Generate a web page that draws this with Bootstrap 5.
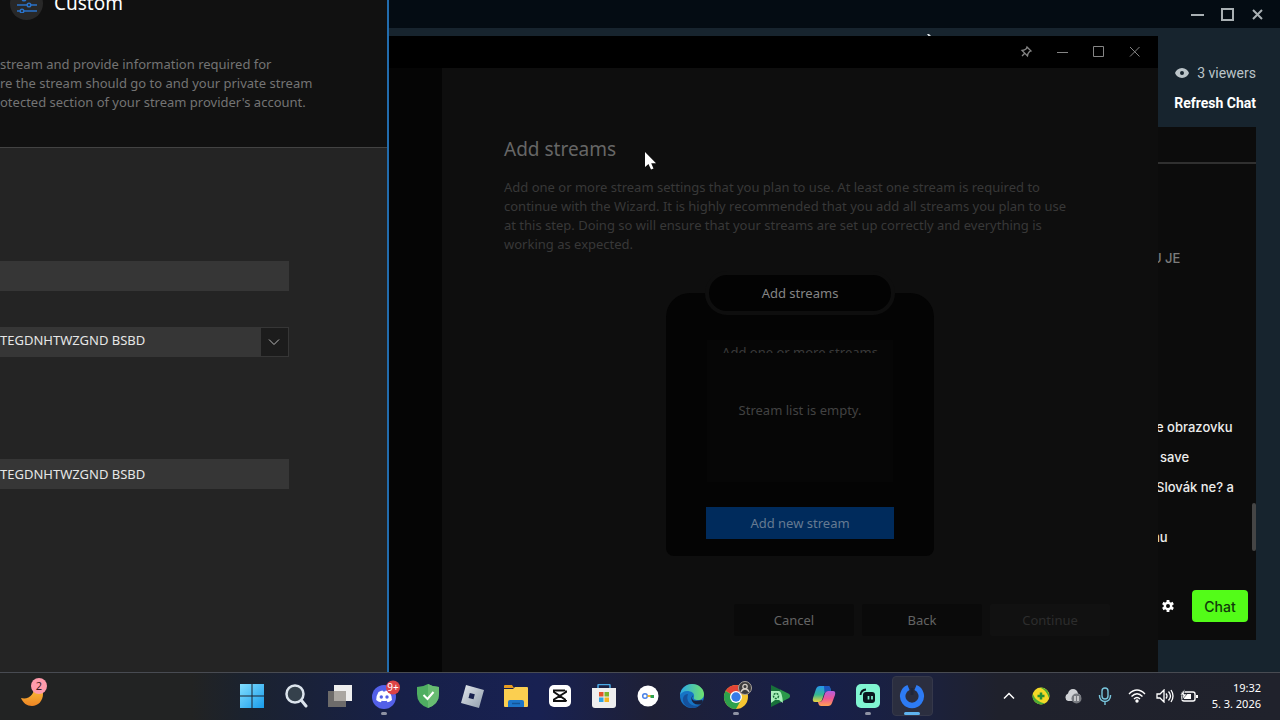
<!DOCTYPE html>
<html lang="en" data-bs-theme="dark">
<head>
<meta charset="utf-8">
<meta name="viewport" content="width=device-width, initial-scale=1">
<title>Desktop</title>
<link href="https://cdn.jsdelivr.net/npm/bootstrap@5.3.0/dist/css/bootstrap.min.css" rel="stylesheet">
<style>
body{font-family:"Noto Sans","Open Sans",sans-serif;font-size:13px;line-height:19px;background:#17242e}
svg{display:block;flex:none}
button{color:inherit}
.plain{background:none;border:0;padding:0}
/* chat application */
.chat-app{inset:0;background:#17242e;font-family:Roboto,sans-serif;font-size:14px}
.chat-bar{height:28px;background:#040c13;color:#a9b0b3;padding-right:16px;gap:17px}
.chat-side{width:128px;margin-right:24px;padding-top:30px}
.chat-side .info{height:30px;color:#bcc5c9}
.chat-side a{height:30px;color:#fff;font-weight:700}
.chat-panel{background:#0c0c0c;margin-top:9px;height:513px;font-family:Inter,sans-serif;font-weight:500;font-size:13px;color:#ececec;padding-left:24px}
.chat-tab{height:37px;border-bottom:2px solid #303030;margin-left:-24px}
.msg{height:30px;line-height:30px}
.m-top{margin-top:79px;color:#7c7c7c}
.m-first{margin-top:139px}
.m-last{margin-top:20px}
.thumb{width:4px;height:48px;right:0;top:376px;background:#454545;border-radius:2px}
.chat-foot{margin-top:38px;padding-right:8px;gap:18px}
.chat-send{width:56px;height:32px;border:0;border-radius:4px;background:#53fc18;color:#10380a;font-size:14px;font-weight:500;padding:0}
.glint{left:925px;top:33px}
/* wizard */
.wizard{left:388px;right:122px;top:36px;bottom:0;background:#0e0e0e}
.wiz-bar{height:32px;background:#000;color:#858585;padding:0 16px 2px 0;gap:21px}
.wiz-rail{width:54px;background:#050505}
.wiz-main{padding:68px 48px 36px 62px}
.wiz-main h1{font-size:19px;line-height:26px;color:#666;font-weight:400;margin:0 0 16px}
.wiz-main p{color:#383838;margin:0}
.stream-card{width:268px;height:263px;margin:39px auto 0;background:#040404;border-radius:24px 24px 8px 8px}
.wiz-mid{padding-right:14px}
.pill{width:190px;height:44px;margin-top:-22px;border:4px solid #0e0e0e;border-radius:22px;background:#030303;color:#858585}
.list-box{width:186px;height:142px;margin-top:25px;background:#060606;color:#424242}
.list-clip{height:10px;margin-top:3px;overflow:hidden;color:#3a3a3a}
.list-empty{padding-bottom:14px}
.btn-new{width:188px;height:32px;margin-top:25px;border:0;border-radius:0;background:#002b5c;color:#657a92}
.wiz-btn{width:120px;height:32px;border:0;border-radius:2px;background:#0a0a0a;color:#646464}
.wiz-btn.off{background:#111;color:#2d2d2d}
/* settings dialog */
.dialog{left:0;top:0;bottom:0;width:389px;background:#242424;border-right:2px solid #226cad;overflow:hidden}
.dlg-head{margin-top:-13px;background:#111;border-bottom:1px solid #434343;height:161px}
.dlg-title{padding-left:10px;gap:11px;height:32px;font-size:19px;color:#fff}
.knob{width:33px;height:33px;border-radius:50%;background:#282828}
.dlg-head p{margin:36px 0 0;color:#747474}
.field{height:30px;width:289px;background:#363636;color:#e6e6e6;border:0;padding:0;border-radius:0;appearance:none}
.f1{margin-top:113px}.f2{margin-top:36px}.f3{margin-top:102px}
.f2 select{padding-bottom:4px}
.drop{right:1px;top:1px;width:27px;height:28px;padding-right:1px;background:#1c1c1c;color:#b8b8b8;pointer-events:none}
/* taskbar */
.taskbar{height:48px;padding-bottom:2px;border-top:1px solid #484b52;background:linear-gradient(90deg,#222323 0,#222323 15%,#1b222e 19%,#172048 31%,#182152 42%,#1e2036 51%,#171f49 64%,#1b213e 72%,#1f212c 78%,#20222c 100%);color:#fff;z-index:5}
.widgets{width:18%;padding-left:20px}
.app,.tray button{display:grid;place-items:center}
.app{width:44px;height:47px}
.app.open::after{content:"";position:absolute;bottom:4px;left:19px;width:6px;height:3px;border-radius:2px;background:#8e92a3}
.app.active::before{content:"";position:absolute;inset:4px 1px 3px 2px;background:#2b2e3f;border:1px solid #35384a;border-radius:4px;z-index:-1}
.app.active{z-index:0}
.app.active::after{width:16px;left:14px;background:#5fb4f0}
.tray{padding-right:19px}
.t-wide{width:32px;height:47px}.t-slim{width:24px;height:47px}
.clock{width:60px;font-size:11px;line-height:16px;text-align:right}
.cursor{left:644px;top:151px;z-index:9}
</style>
</head>
<body class="vh-100 d-flex flex-column overflow-hidden">
<main class="position-relative flex-fill overflow-hidden">

<section class="chat-app position-absolute d-flex flex-column" aria-label="Chat">
  <header class="chat-bar d-flex justify-content-end align-items-center">
    <button class="plain" aria-label="Minimize"><svg width="13" height="13" stroke="currentColor" stroke-width="2"><path d="M0 7h13"/></svg></button>
    <button class="plain" aria-label="Maximize"><svg width="13" height="13" fill="none" stroke="currentColor" stroke-width="2"><path d="M1 1h11v11H1z"/></svg></button>
    <button class="plain" aria-label="Close"><svg width="13" height="13" fill="none" stroke="currentColor" stroke-width="2"><path d="M2 2l9 9M11 2l-9 9"/></svg></button>
  </header>
  <svg class="glint position-absolute" width="8" height="5" fill="#dfe5e8"><path d="M2 1l2 0 3 3H4z"/></svg>
  <div class="chat-side align-self-end text-nowrap">
    <div class="info d-flex align-items-center justify-content-end gap-2"><svg width="14" height="12" viewBox="0 0 14 12"><path fill="#bcc5c9" fill-rule="evenodd" d="M7 1C3.600 1 1 3.200 0 6c1 2.800 3.600 5 7 5s6-2.200 7-5C13 3.200 10.400 1 7 1zm0 3a2 2 0 1 1 0 4 2 2 0 0 1 0-4z"/></svg>3 viewers</div>
    <a href="#" class="d-flex align-items-center justify-content-end text-decoration-none">Refresh Chat</a>
    <div class="chat-panel position-relative overflow-hidden">
      <div class="chat-tab"></div>
      <div class="msg m-top">U JE</div>
      <div class="msg m-first ps-1">e obrazovku</div>
      <div class="msg ps-2">save</div>
      <div class="msg ps-1">Slovák ne? a</div>
      <div class="msg m-last">nu</div>
      <div class="thumb position-absolute"></div>
      <div class="chat-foot d-flex align-items-center justify-content-end">
        <button class="plain" aria-label="Chat settings"><svg width="12" height="12" viewBox="0 0 12 12"><path d="M6 0v3M6 9v3M.8 3l2.600 1.500M8.600 7.500L11.200 9M.8 9l2.600-1.500M8.600 4.500L11.200 3" stroke="#fff" stroke-width="2.800"/><circle cx="6" cy="6" r="3.200" fill="#0c0c0c" stroke="#fff" stroke-width="2.400"/></svg></button>
        <button class="chat-send">Chat</button>
      </div>
    </div>
  </div>
</section>

<section class="wizard position-absolute d-flex flex-column" aria-label="Wizard">
  <header class="wiz-bar d-flex justify-content-end align-items-center">
    <button class="plain" aria-label="Pin"><svg width="15" height="15" viewBox="0 0 15 15" fill="none" stroke="currentColor" stroke-width="1.300"><path d="M8 3l4 4-1.500.5-1.500 2-.5 2.500L3 6.500 5.500 6l2-1.500zM5.500 9.500L3 12"/></svg></button>
    <button class="plain" aria-label="Minimize"><svg width="15" height="15" stroke="currentColor"><path d="M2 8.500h11"/></svg></button>
    <button class="plain" aria-label="Maximize"><svg width="15" height="15" fill="none" stroke="currentColor"><path d="M2.500 2.500h10v10h-10z"/></svg></button>
    <button class="plain" aria-label="Close"><svg width="15" height="15" fill="none" stroke="currentColor"><path d="M3 3l9.500 9.500M12.500 3L3 12.500"/></svg></button>
  </header>
  <div class="d-flex flex-fill">
    <div class="wiz-rail"></div>
    <div class="wiz-main flex-fill d-flex flex-column">
      <h1>Add streams</h1>
      <p class="text-nowrap">Add one or more stream settings that you plan to use. At least one stream is required to<br>continue with the Wizard. It is highly recommended that you add all streams you plan to use<br>at this step. Doing so will ensure that your streams are set up correctly and everything is<br>working as expected.</p>
      <div class="wiz-mid">
        <div class="stream-card d-flex flex-column align-items-center">
          <div class="pill d-flex align-items-center justify-content-center flex-shrink-0">Add streams</div>
          <div class="list-box text-center d-flex flex-column">
            <div class="list-clip text-nowrap">Add one or more streams</div>
            <div class="list-empty flex-fill d-flex align-items-center justify-content-center">Stream list is empty.</div>
          </div>
          <button class="btn-new">Add new stream</button>
        </div>
      </div>
      <div class="d-flex justify-content-end gap-2 mt-auto">
        <button class="wiz-btn">Cancel</button><button class="wiz-btn">Back</button><button class="wiz-btn off" disabled>Continue</button>
      </div>
    </div>
  </div>
</section>

<section class="dialog position-absolute" aria-label="Custom stream">
  <header class="dlg-head">
    <div class="dlg-title d-flex align-items-center">
      <span class="knob d-flex align-items-center justify-content-center"><svg width="22" height="20" viewBox="0 0 22 20" fill="none" stroke="#2a72c8" stroke-width="1.500"><path d="M1 6h5M10 6h11M1 12h10M15 12h6M1 18h3M8 18h13"/><circle cx="8" cy="6" r="1.800"/><circle cx="13" cy="12" r="1.800"/><circle cx="6" cy="18" r="1.800"/></svg></span>Custom
    </div>
    <p class="text-nowrap">stream and provide information required for<br>re the stream should go to and your private stream<br>otected section of your stream provider's account.</p>
  </header>
  <div class="f1"><input class="field d-block" aria-label="Stream name"></div>
  <div class="f2 position-relative field">
    <select class="field d-block" aria-label="Stream server"><option>TEGDNHTWZGND BSBD</option></select>
    <span class="drop position-absolute d-flex align-items-center justify-content-center"><svg width="12" height="8" fill="none" stroke="currentColor"><path d="M1 1.500l5 5 5-5"/></svg></span>
  </div>
  <div class="f3"><input class="field d-block" aria-label="Stream key" value="TEGDNHTWZGND BSBD"></div>
</section>

<svg class="cursor position-absolute" width="14" height="20" viewBox="0 0 14 20"><path d="M1 1v15l3.500-3 2.500 5.500 2.500-1-2.300-5.300H12z" fill="#fff"/></svg>
</main>

<footer class="taskbar d-flex align-items-center position-relative flex-shrink-0">
  <div class="widgets">
    <button class="plain" aria-label="Weather"><svg width="28" height="30" viewBox="0 0 28 30"><defs><linearGradient id="mo" x2="0" y2="1"><stop stop-color="#fcc43c"/><stop offset="1" stop-color="#ee8524"/></linearGradient></defs><path d="M1 20c8 2 14-4 13-12 6 0 9 4 9 8 0 7-5 12-11 12-5 0-9-3-11-8z" fill="url(#mo)"/><circle cx="19" cy="8" r="8" fill="#ff9bac"/><text x="19" y="12" font-size="11" text-anchor="middle" fill="#3a1b22">2</text></svg></button>
  </div>
  <nav class="d-flex" aria-label="Apps">
    <button class="plain app" aria-label="Start"><svg width="24" height="24" viewBox="0 0 24 24"><defs><linearGradient id="wi" x2="1" y2="1"><stop stop-color="#83dfff"/><stop offset="1" stop-color="#189bea"/></linearGradient></defs><path fill="url(#wi)" d="M0 0h11.500v11.500H0zM12.500 0H24v11.500H12.500zM0 12.500h11.500V24H0zM12.500 12.500H24V24H12.500z"/></svg></button>
    <button class="plain app" aria-label="Search"><svg width="24" height="24" viewBox="0 0 24 24"><circle cx="11" cy="10" r="8.500" fill="#35414c" stroke="#dce4ed" stroke-width="2.500"/><path d="M17.500 16.500L22 22" stroke="#dce4ed" stroke-width="3" stroke-linecap="round"/></svg></button>
    <button class="plain app" aria-label="Task view"><svg width="24" height="24" viewBox="0 0 24 24"><path d="M6 1h18v16H6z" fill="#eee"/><path d="M0 7h18v16H0z" fill="#77736f" opacity=".9"/><path d="M6 7h12v10H6z" fill="#aaa6a1"/></svg></button>
    <button class="plain app open position-relative" aria-label="Discord"><svg width="32" height="32" viewBox="0 0 32 32"><circle cx="16" cy="17" r="12" fill="#5360e8"/><path d="M10.500 12q2.500-1.500 4-1.500l.6 1h2l.6-1q2 .1 4 1.500 2.500 4.500 2.300 8-2 2-4.500 2.200l-.8-1.500q-2.700.6-5 0l-.8 1.500Q10 22 8.200 20q-.2-4 2.300-8z" fill="#fff"/><circle cx="13.300" cy="17" r="1.700" fill="#5360e8"/><circle cx="19" cy="17" r="1.700" fill="#5360e8"/><circle cx="25" cy="7.500" r="7" fill="#dc4347"/><text x="25" y="11" font-size="10" text-anchor="middle" fill="#fff">9+</text></svg></button>
    <button class="plain app" aria-label="Security"><svg width="24" height="24" viewBox="0 0 24 24"><path d="M12 0q5 3 11 3v7q0 10-11 14Q1 20 1 10V3q6 0 11-3z" fill="#4fae62"/><path d="M12 0q5 3 11 3v7q0 10-11 14z" fill="#68bc72"/><path d="M7.500 11l4 4 6-7" fill="none" stroke="#fff" stroke-width="2"/></svg></button>
    <button class="plain app" aria-label="Roblox"><svg width="24" height="24" viewBox="0 0 24 24"><defs><linearGradient id="rb" x2="1" y2="1"><stop stop-color="#e4e9ee"/><stop offset="1" stop-color="#8f9cab"/></linearGradient></defs><path fill="url(#rb)" fill-rule="evenodd" d="M6 1l18 5-5 18-18-5zm3.800 8L8.500 14l5 1.300 1.300-5z"/></svg></button>
    <button class="plain app" aria-label="Files"><svg width="26" height="24" viewBox="0 0 26 24"><path d="M1 2q0-1 1-1h7l2 3h-10z" fill="#e89b20"/><path d="M1 5h9l2-2h12q1 0 1 1v18q0 1-1 1H2q-1 0-1-1z" fill="#fbcf50"/><path d="M5 23v-5q0-2 2-2h12q2 0 2 2v5z" fill="#1d75c8"/><path d="M9 19.500h8" stroke="#145495" stroke-width="1.500"/></svg></button>
    <button class="plain app" aria-label="CapCut"><svg width="22" height="22" viewBox="0 0 22 22"><rect width="22" height="22" rx="5" fill="#fff"/><path d="M17 5.500V7L5 14.500V16h11v-1.500L5 7V5.500h11M17 15v1.500" fill="none" stroke="#111" stroke-width="2"/></svg></button>
    <button class="plain app" aria-label="Store"><svg width="24" height="24" viewBox="0 0 24 24"><path d="M6 5V1.500q0-1 1-1h10q1 0 1 1V5" fill="none" stroke="#4aa9e6" stroke-width="1.500"/><path d="M0 4h24v17q0 3-3 3H3q-3 0-3-3z" fill="#eee"/><path fill="#e4532a" d="M7 8h4.500v4.500H7z"/><path fill="#7cb52b" d="M12.500 8H17v4.500h-4.500z"/><path fill="#2fa3e4" d="M7 13.500h4.500V18H7z"/><path fill="#f5b51f" d="M12.500 13.500H17V18h-4.500z"/></svg></button>
    <button class="plain app" aria-label="Passwords"><svg width="22" height="22" viewBox="0 0 22 22"><circle cx="11" cy="11" r="10.500" fill="#fff"/><circle cx="8" cy="11" r="2.300" fill="none" stroke="#4a82e8" stroke-width="1.500"/><path d="M10.500 11H14" stroke="#f4b62b" stroke-width="2"/><path d="M13.500 11.500H17" stroke="#2fa350" stroke-width="3"/></svg></button>
    <button class="plain app" aria-label="Edge"><svg width="26" height="26" viewBox="0 0 26 26"><defs><linearGradient id="ed"><stop stop-color="#2aa7e9"/><stop offset="1" stop-color="#70e26c"/></linearGradient></defs><circle cx="13" cy="13" r="12" fill="#1674c5"/><path d="M1 12C2 5 7 1 13 1c7 0 12 5 12 10 0 4-3 6-6 6-3 0-5-1-4-3 1-4-3-6-7-6-3 0-6 2-7 4z" fill="url(#ed)"/><path d="M9 11c-3 8 4 14 12 11-4 4-11 4-15 0-4-5-2-11 3-11z" fill="#15519c"/><path d="M14 12q-4 8 9 5l1 1-1.500 3q-5 1.500-8-1-4-4-.5-8z" fill="#19213e"/></svg></button>
    <button class="plain app open position-relative" aria-label="Chrome"><svg width="32" height="32" viewBox="0 0 32 32"><circle cx="16" cy="17" r="12" fill="#f5c531"/><path d="M16 17L5.600 11A12 12 0 0 1 26.400 11z" fill="#e34436"/><path d="M16 17L5.600 11A12 12 0 0 0 16 29l5-9z" fill="#2da14d"/><circle cx="16" cy="17" r="6" fill="#fff"/><circle cx="16" cy="17" r="4.700" fill="#357be8"/><circle cx="25" cy="8" r="6.500" fill="#3c3b3c" stroke="#aaa49d"/><circle cx="25" cy="6.500" r="2.200" fill="none" stroke="#d2cbc3" stroke-width="1.300"/><path d="M21 12q1-3 4-3t4 3" fill="none" stroke="#d2cbc3" stroke-width="1.300"/></svg></button>
    <button class="plain app" aria-label="Play Games"><svg width="22" height="24" viewBox="0 0 22 24"><path d="M2 1l18 9q2 2 0 4L2 23z" fill="#18713a"/><path d="M11 5.500l9 4.500q2 2 0 4l-9 4.500z" fill="#2a994a"/><path d="M2 7h8q3 0 4 12l-4-3H6l-4 3z" fill="#a9f0bb"/><circle cx="7" cy="12" r="2.500" fill="none" stroke="#18713a" stroke-width="1.500" stroke-dasharray="2 1"/></svg></button>
    <button class="plain app" aria-label="Copilot"><svg width="24" height="24" viewBox="0 0 24 24"><defs><linearGradient id="c1" x2="0" y2="1"><stop stop-color="#2795ee"/><stop offset=".55" stop-color="#35b990"/><stop offset="1" stop-color="#efd340"/></linearGradient><linearGradient id="c2" x2="0" y2="1"><stop stop-color="#b45ee0"/><stop offset=".5" stop-color="#ed5796"/><stop offset="1" stop-color="#ffa152"/></linearGradient></defs><path d="M8 2h8q2 0 2.500 3l.5 2h-4q-2 0-3 3l-2 6q-.5 2-3 2H3q-3 0-2-4L4 5q1-3 4-3z" fill="url(#c1)"/><path d="M16 22H9q-2 0-2.500-2L6 18h2q2 0 3-3l2-6q1-2 3-2h5q3 0 2 4l-3 8q-1 3-4 3z" fill="url(#c2)"/><path d="M12 2h4q2 0 2.500 3l.5 2h-4q-1.500 0-2.500 2z" fill="#1c55bd"/></svg></button>
    <button class="plain app open position-relative" aria-label="Streamlabs"><svg width="24" height="24" viewBox="0 0 24 24"><rect width="24" height="24" rx="5" fill="#80f5d2"/><rect x="7" y="8" width="12" height="11" rx="3" fill="#09161e"/><path d="M4.500 11Q5 6 10 5.500" fill="none" stroke="#09161e" stroke-width="1.800"/><path d="M12.500 12v3.500M16 12v3.500" stroke="#80f5d2" stroke-width="1.700"/></svg></button>
    <button class="plain app open active position-relative" aria-label="Stream wizard"><svg width="26" height="26" viewBox="0 0 26 26"><path d="M9.500 4.500a9.300 9.300 0 1 0 7 0" fill="none" stroke="#2d7bf4" stroke-width="5.500"/><path d="M13 5v7" stroke="#20263a" stroke-width="3"/></svg></button>
  </nav>
  <div class="tray d-flex align-items-center ms-auto">
    <button class="plain t-wide" aria-label="Hidden icons"><svg width="12" height="8" fill="none" stroke="#fff" stroke-width="1.500"><path d="M1 6.500l5-5 5 5"/></svg></button>
    <button class="plain t-wide" aria-label="Updates"><svg width="18" height="18" viewBox="0 0 18 18"><circle cx="9" cy="9" r="8.500" fill="#f4d927"/><path d="M.8 7a8.500 8.500 0 0 0 12 9.500Q4 15 .8 7zM17 11A8.500 8.500 0 0 0 8 .6q6 2 9 10.400z" fill="#4aab35"/><path d="M9 5.500v7M5.500 9h7" stroke="#268d32" stroke-width="2.500"/></svg></button>
    <button class="plain t-wide" aria-label="Cloud sync paused"><svg width="18" height="16" viewBox="0 0 18 16"><path d="M4 13a4 4 0 0 1 0-7.500Q5 1 9 1q4 0 5 4.500 3 1 3 4t-3 3.500z" fill="#cfd1d5"/><circle cx="12.500" cy="10.500" r="5" fill="#777a80"/><path d="M11 8v5M14 8v5" stroke="#eee" stroke-width="1.300"/></svg></button>
    <button class="plain t-wide" aria-label="Microphone"><svg width="14" height="18" viewBox="0 0 14 18" fill="none" stroke="#78c5dc" stroke-width="1.400"><rect x="4" y="1" width="6" height="11" rx="3"/><path d="M1.500 8v1a5.500 5.500 0 0 0 11 0V8M7 14.500V18"/></svg></button>
    <button class="plain t-wide" aria-label="Network"><svg width="18" height="14" viewBox="0 0 18 14" fill="none" stroke="#fff" stroke-width="1.400"><path d="M1 5q8-8 16 0M3.500 7.500q5.500-5.500 11 0M6 10q3-3 6 0"/><circle cx="9" cy="12" r="1" fill="#fff"/></svg></button>
    <button class="plain t-slim" aria-label="Volume"><svg width="18" height="14" viewBox="0 0 18 14" fill="none" stroke="#fff" stroke-width="1.300"><path d="M1 5h3l4-4v12L4 9H1zM10 4.500q2 2.500 0 5M12.500 2.500q4 4.500 0 9M15 1q4 6 0 12"/></svg></button>
    <button class="plain t-slim" aria-label="Battery"><svg width="18" height="14" viewBox="0 0 18 14"><rect x="2" y="3" width="13" height="9" rx="2" fill="none" stroke="#fff" stroke-width="1.400"/><path d="M4 5h7v5H4zM16 6h2v3h-2z" fill="#fff"/><path d="M5 0L0 6h3L2 11l5-6H4z" fill="#fff" stroke="#1f212c" stroke-width=".6"/></svg></button>
    <div class="clock text-nowrap">19:32<br>5. 3. 2026</div>
  </div>
</footer>
<script src="https://cdn.jsdelivr.net/npm/bootstrap@5.3.0/dist/js/bootstrap.bundle.min.js"></script>
</body>
</html>
